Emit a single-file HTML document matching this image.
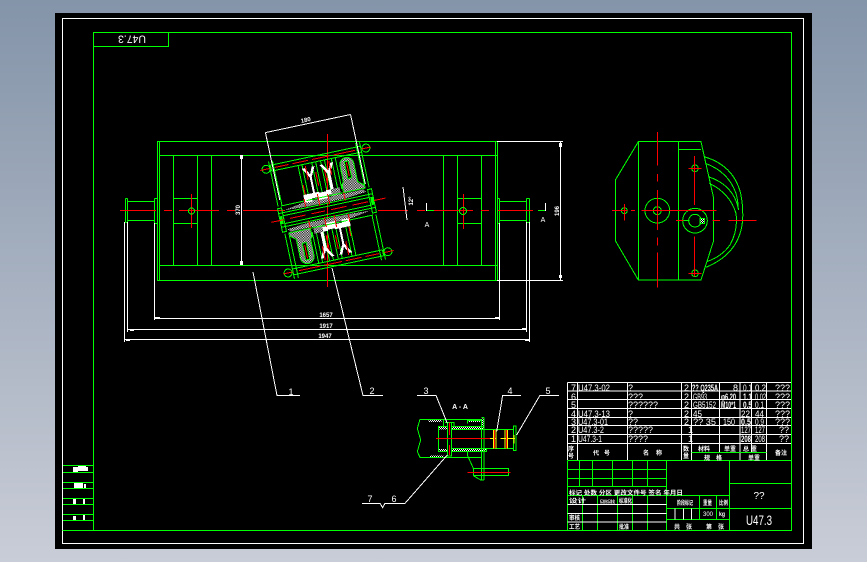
<!DOCTYPE html>
<html><head><meta charset="utf-8"><style>
html,body{margin:0;padding:0;width:867px;height:562px;overflow:hidden;background:#aab}
svg{display:block}
text{font-family:"Liberation Sans","Noto Sans CJK SC",sans-serif;fill:#fff;stroke:none}
.g{stroke:#0f0;fill:none}.r{stroke:#f00;fill:none}.w{stroke:#fff;fill:none}.y{stroke:#ff0;fill:none}
</style></head><body>
<svg width="867" height="562" viewBox="0 0 867 562" xmlns="http://www.w3.org/2000/svg" shape-rendering="crispEdges">
<defs>
<linearGradient id="bg" x1="0" y1="0" x2="0" y2="1"><stop offset="0" stop-color="#8494a9"/><stop offset="1" stop-color="#c9cdd7"/></linearGradient>
<pattern id="h" width="2" height="2" patternUnits="userSpaceOnUse"><rect width="2" height="2" fill="#000"/><rect width="1" height="1" fill="#fff"/><rect x="1" y="1" width="1" height="1" fill="#fff"/></pattern>
<pattern id="hz" width="6" height="6" patternUnits="userSpaceOnUse"><rect width="6" height="6" fill="#000"/><rect width="3" height="3" fill="#fff"/><rect x="3" y="3" width="3" height="3" fill="#fff"/></pattern>
<g id="half">
 <path class="g" d="M-46 -56H46M-46 -50H46M-46 -56V-50M46 -56V-50"/>
 <path class="r" d="M-42 -53H-28M-24 -53H-8M-4 -53H14M18 -53H40"/>
 <circle class="g" cx="51" cy="-53" r="4"/><circle class="g" cx="-51" cy="-53" r="4"/>
 <path class="r" d="M-57 -53H-46M46 -53H56"/>
 <path class="g" d="M-47 -60V-14M-43 -60V-14M46 -60V-14M42 -60V-14"/>
 <path class="g" d="M-19 -50V-18M-15 -50V-18M-5 -50V-18M-1 -50V-18M4 -50V-18M8 -50V-18M15 -50V-18M19 -50V-18"/>
 <path d="M-16 -46L-10 -36V-20H-15V-15H-4V-20H-8V-36L-3 -46H-6L-9 -39L-13 -46Z" fill="#fff"/>
 <path d="M2 -46L8 -36V-20H3V-15H16V-20H11V-36L16 -46H13L9.500 -39L5 -46Z" fill="#fff"/>
 <path d="M22 -41A7 7 0 0 1 36 -41V-22L42 -17V-14H20V-22L22 -25Z" fill="url(#h)" stroke="#0f0"/>
 <rect x="27" y="-44" width="4" height="17" fill="#000" stroke="#0f0"/>
 <path class="r" d="M29 -43V-29M-12 -48V-34M12 -48V-34M-3 -40V-26M6 -40V-24M-18 -30V-20"/>
 <path d="M-42 -9L-20 -13H40L42 -10L20 -8H-20Z" fill="url(#h)"/>
 <rect x="-20" y="-20" width="8" height="8" fill="#fff"/><rect x="-6" y="-19" width="10" height="7" fill="#fff"/><rect x="8" y="-20" width="9" height="7" fill="url(#h)"/>
 <path class="g" d="M-48 -7H48M-44 -4H44M-18 -14H42M-44 -14H-20"/>
 <path class="r" d="M-20 -16V-8M-6 -18V-6M4 -16V-6M20 -14V-6"/>
 <rect x="44" y="-12" width="4" height="24" stroke="#0f0" fill="none"/><rect x="45" y="-4" width="3" height="8" fill="#0f0"/>
</g>
</defs>
<rect width="867" height="562" fill="url(#bg)"/>
<rect x="55" y="13" width="757" height="536" fill="#000"/>
<rect class="w" x="62.500" y="18.500" width="741" height="525"/>
<path class="g" d="M93.500 530.500V32.500H791.500V530.500H62.500M93.500 46.500H168.500V32.500"/>
<text transform="translate(132,39.500) rotate(180)" text-anchor="middle" y="4" font-size="11" textLength="28" lengthAdjust="spacingAndGlyphs">U47.3</text>

<!-- left stamp box -->
<path class="g" d="M63 465.500H93M63 472.500H93M63 482.500H93M63 488.500H93M63 498.500H93M63 504.500H93M63 514.500H93M63 520.500H93"/>
<g fill="#fff"><rect x="73" y="467" width="5" height="5"/><rect x="78" y="466" width="8" height="5"/><rect x="86" y="467" width="2" height="4"/><rect x="74" y="483" width="9" height="5"/><rect x="84" y="484" width="2" height="4"/><rect x="73" y="499" width="3" height="5"/><rect x="83" y="499" width="2" height="5"/><rect x="73" y="516" width="3" height="4"/><rect x="83" y="515" width="2" height="5"/></g>

<!-- main view -->
<path class="g" d="M157.500 141.500H497.500V280.500H157.500ZM159.500 141.500V280.500M495.500 141.500V280.500M159.500 155.500H497M159.500 265.500H497M173.500 155.500V265.500M197.500 155.500V265.500M211.500 155.500V265.500M443.500 155.500V265.500M457.500 155.500V265.500M481.500 155.500V265.500M173.500 198.500H197.500M173.500 223.500H197.500M457.500 198.500H481.500M457.500 223.500H481.500"/>
<path class="g" d="M125.500 198.500V222.500M127.500 198.500V222.500M125.500 198.500H127.500M125.500 222.500H127.500M127.500 201.500H154.500M127.500 220.500H154.500M154.500 198.500V223.500M157 198.500H154.500M157 223.500H154.500"/>
<path class="g" d="M499.500 198.500V223.500M497 198.500H499.500M497 223.500H499.500M499.500 201.500H526.500M499.500 220.500H526.500M526.500 198.500V222.500M529.500 198.500V222.500M526.500 198.500H529.500M526.500 222.500H529.500"/>
<path class="r" d="M120 210.500H156M164 210.500H172M179 210.500H219M227 210.500H235M243 210.500H285M378 210.500H408M417 210.500H425M434 210.500H473M481 210.500H489M498 210.500H533M191.500 194V228M463.500 194V229M327.500 134V287"/>
<path class="g" d="M427 210.500H434M538 210.500H545"/>
<circle class="g" cx="191.500" cy="211" r="3"/><circle class="g" cx="463" cy="211" r="3.500"/>
<path class="w" d="M426.500 203V211M545.500 203V211M241.500 155V265M560.500 141V280M497 141.500H563M497 280.500H563"/>
<path class="w" d="M154.500 223V320M154 318.500H500M499.500 223V320M127.500 222V332M127 329.500H527M526.500 222V332M124.500 222V342M124 339.500H530M529.500 222V342"/>
<g fill="#fff"><rect x="240" y="155" width="3" height="4"/><rect x="240" y="261" width="3" height="4"/><rect x="559" y="143" width="3" height="4"/><rect x="559" y="275" width="3" height="3"/><rect x="155" y="317" width="5" height="1"/><rect x="495" y="317" width="4" height="1"/><rect x="130" y="330" width="4" height="1"/><rect x="522" y="328" width="4" height="2"/><rect x="126" y="340" width="4" height="1"/><rect x="525" y="340" width="4" height="1"/></g>
<text x="326" y="317" text-anchor="middle" font-size="6" font-weight="bold">1657</text>
<text x="326" y="328" text-anchor="middle" font-size="6" font-weight="bold">1917</text>
<text x="325" y="338" text-anchor="middle" font-size="6" font-weight="bold">1947</text>
<text transform="translate(238,210) rotate(-90)" text-anchor="middle" y="2" font-size="6" font-weight="bold">370</text>
<text transform="translate(557,211) rotate(-90)" text-anchor="middle" y="2" font-size="6" font-weight="bold">196</text>
<text x="427" y="227" text-anchor="middle" font-size="7">A</text>
<text x="543" y="222" text-anchor="middle" font-size="7">A</text>

<!-- rotated assembly -->
<g transform="translate(327,210.500) rotate(-12)">
 <use href="#half"/>
 <use href="#half" transform="rotate(180)"/>
 <path class="r" d="M-57 0H-44M-38 0H-22M-16 0H-2M4 0H20M26 0H42M48 0H60"/>
 <path class="w" d="M-44 -89H43M-44 -89V-20M43 -89V-18"/>
 <text x="-2" y="-91" font-size="6" font-weight="bold" text-anchor="middle">180</text>
</g>
<path class="w" d="M403 187L407 220"/>
<text transform="translate(411,201) rotate(-90)" text-anchor="middle" y="2" font-size="6" font-weight="bold">12°</text>

<!-- leaders -->
<path class="w" d="M253 272L277 395.500H300M332 268L363 395.500H383"/>
<text x="291" y="395" text-anchor="middle" font-size="9">1</text>
<text x="372" y="394" text-anchor="middle" font-size="9">2</text>

<!-- side view -->
<g transform="translate(600,130) scale(.3333)" stroke-width="3">
 <path class="g" d="M115 35L46 150V332L115 450H303L340 335V200L303 35ZM115 35V450M235 35V450M235 58H303" stroke-width="3"/>
 <path class="g" stroke-width="3" d="M312 80Q400 105 422 190Q430 230 428 270Q420 370 318 412M316 100Q385 125 408 190Q415 215 415 240M325 140Q400 165 415 235M328 160Q390 190 408 250Q415 300 390 345Q365 380 320 395"/>
 <circle class="g" stroke-width="3" cx="172" cy="242" r="37"/><circle class="g" stroke-width="3" cx="172" cy="242" r="12"/>
 <circle class="g" stroke-width="3" cx="285" cy="272" r="37"/><circle class="g" stroke-width="3" cx="285" cy="272" r="19"/>
 <circle class="g" stroke-width="3" cx="285" cy="115" r="10"/><circle class="g" stroke-width="3" cx="285" cy="430" r="10"/><circle class="g" stroke-width="3" cx="73" cy="242" r="9"/>
 <rect x="300" y="266" width="14" height="14" fill="url(#hz)" stroke="#0f0" stroke-width="3"/>
 <path class="g" stroke-width="3" d="M250 272H268"/>
 <path class="r" stroke-width="3" d="M172 6V107M172 132V155M172 180V300M172 322V347M172 368V473M36 242H82M93 242H105M125 242H350M283 78V225M283 320V440M228 272H250M338 272H360M385 272H470M265 115H305M265 430H305M73 222V272"/>
</g>

<!-- section A-A -->
<g transform="translate(360,380) scale(.3333)" stroke-width="3">
 <rect x="275" y="140" width="97" height="8" fill="url(#hz)"/><rect x="275" y="207" width="105" height="8" fill="url(#hz)"/>
 <rect x="235" y="140" width="27" height="8" fill="url(#hz)"/><rect x="235" y="207" width="27" height="8" fill="url(#hz)"/>
 <rect x="205" y="120" width="40" height="6" fill="url(#hz)"/><rect x="210" y="226" width="40" height="6" fill="url(#hz)"/>
 <rect x="325" y="120" width="40" height="6" fill="url(#hz)"/><rect x="365" y="115" width="7" height="25" fill="url(#hz)"/>
 <path class="g" stroke-width="3" d="M365 118H180L172 145L182 180L172 215L180 232H365M235 140H262V215H235ZM262 128V228H275V128ZM255 128H282V140M275 148H460M275 205H460M275 140H372M275 215H380V205M460 148V205M460 138H468V212H460ZM365 118V300M372 112V300M365 112H372M322 130V122H365M250 118V140M322 215V225L340 265H445V287H340V265M340 287L362 300H372"/>
 <path class="r" stroke-width="3" d="M228 175H392M323 277H452M268 128V165M268 195V225"/>
 <path class="y" stroke-width="3" d="M400 150V205M408 150V205M435 150V205M443 150V205M390 175H410M422 175H465M462 165V190"/>
 <path class="r" stroke-width="3" d="M404 150V205M439 150V205"/>
 <path class="w" stroke-width="3" d="M6 370H60L68 383L75 370H135L262 225M171 46H228L262 130M483 46H428L410 155M597 46H540L470 165"/>
</g>
<text x="426" y="394" text-anchor="middle" font-size="9">3</text>
<text x="510" y="394" text-anchor="middle" font-size="9">4</text>
<text x="548" y="394" text-anchor="middle" font-size="9">5</text>
<text x="370" y="502" text-anchor="middle" font-size="9">7</text>
<text x="394" y="502" text-anchor="middle" font-size="9">6</text>
<text x="460" y="409" text-anchor="middle" font-size="7" font-weight="bold">A - A</text>

<!-- title block -->
<g transform="translate(560,375) scale(.3333)">
 <path class="w" stroke-width="3" d="M22 22H693M22 48H693M22 74H693M22 100H693M22 127H693M22 152H693M22 178H693M22 205H693M22 22V255M52 22V255M202 22V255M365 22V255M395 22V255M478 22V232M540 22V255M575 22V232M620 22V255"/>
 <path class="g" stroke-width="3" d="M395 232H620M22 256H693M22 283H320M22 310H320M22 335H320M22 362H508M22 256V465M58 256V335M97 256V335M157 256V335M218 256V335M263 256V335M320 256V465M67 362V465M112 362V465M172 362V465M218 362V465M263 362V465M508 256V465M508 325H693M320 400H693M320 433H508M418 362V433M470 362V433"/>
 <path class="w" stroke-width="3" d="M22 415H320M22 441H320M22 388H320M345 400V433M370 400V433M395 400V433"/>
</g>
<g font-size="9">
<g transform="translate(0,383)">
<text x="571" y="8">7</text><text x="578" y="8" font-size="9" textLength="32" lengthAdjust="spacingAndGlyphs">U47.3-02</text><text x="628" y="8">?</text><text x="684" y="8">2</text><text x="692" y="8" textLength="26" lengthAdjust="spacingAndGlyphs" font-weight="bold">?? Q235A</text><text x="733" y="8">8</text><text x="743" y="8" textLength="9" lengthAdjust="spacingAndGlyphs">0.1</text><text x="755" y="8" textLength="11" lengthAdjust="spacingAndGlyphs">0.2</text><text x="775" y="8">???</text>
</g>
<g transform="translate(0,392)">
<text x="571" y="8">6</text><text x="628" y="8">???</text><text x="684" y="8">2</text><text x="693" y="8" textLength="14" lengthAdjust="spacingAndGlyphs">GB93</text><text x="721" y="8" textLength="15" lengthAdjust="spacingAndGlyphs" font-weight="bold">φ6.20</text><text x="743" y="8" textLength="9" lengthAdjust="spacingAndGlyphs" font-weight="bold">1.1</text><text x="755" y="8" textLength="11" lengthAdjust="spacingAndGlyphs">0.02</text><text x="775" y="8">???</text>
</g>
<g transform="translate(0,400)">
<text x="571" y="8">5</text><text x="628" y="8">??????</text><text x="684" y="8">2</text><text x="693" y="8" textLength="23" lengthAdjust="spacingAndGlyphs">GB5152</text><text x="721" y="8" textLength="15" lengthAdjust="spacingAndGlyphs" font-weight="bold">M10*1</text><text x="743" y="8" textLength="9" lengthAdjust="spacingAndGlyphs" font-weight="bold">0.5</text><text x="755" y="8" textLength="9" lengthAdjust="spacingAndGlyphs">0.1</text><text x="775" y="8">???</text>
</g>
<g transform="translate(0,409)">
<text x="571" y="8">4</text><text x="578" y="8" textLength="32" lengthAdjust="spacingAndGlyphs">U47.3-13</text><text x="628" y="8">?</text><text x="684" y="8">2</text><text x="693" y="8" textLength="9" lengthAdjust="spacingAndGlyphs">45</text><text x="741" y="8" textLength="9" lengthAdjust="spacingAndGlyphs">22</text><text x="755" y="8" textLength="9" lengthAdjust="spacingAndGlyphs">44</text><text x="775" y="8">???</text>
</g>
<g transform="translate(0,417)">
<text x="571" y="8">3</text><text x="578" y="8" textLength="30" lengthAdjust="spacingAndGlyphs">U47.3-01</text><text x="628" y="8">??</text><text x="684" y="8">2</text><text x="693" y="8" textLength="23" lengthAdjust="spacingAndGlyphs">?? 35</text><text x="723" y="8" textLength="12" lengthAdjust="spacingAndGlyphs">150</text><text x="741" y="8" textLength="10" lengthAdjust="spacingAndGlyphs" font-weight="bold">0.5</text><text x="755" y="8" textLength="9" lengthAdjust="spacingAndGlyphs">0.9</text><text x="775" y="8">???</text>
</g>
<g transform="translate(0,425)">
<text x="571" y="8">2</text><text x="578" y="8" textLength="26" lengthAdjust="spacingAndGlyphs">U47.3-2</text><text x="628" y="8">?????</text><text x="688" y="8">1</text><text x="741" y="8" textLength="10" lengthAdjust="spacingAndGlyphs">127</text><text x="755" y="8" textLength="10" lengthAdjust="spacingAndGlyphs">127</text><text x="779" y="8">??</text>
</g>
<g transform="translate(0,434)">
<text x="571" y="8">1</text><text x="578" y="8" textLength="24" lengthAdjust="spacingAndGlyphs">U47.3-1</text><text x="628" y="8">????</text><text x="688" y="8">1</text><text x="741" y="8" textLength="10" lengthAdjust="spacingAndGlyphs" font-weight="bold">208</text><text x="755" y="8" textLength="10" lengthAdjust="spacingAndGlyphs">208</text><text x="779" y="8">??</text>
</g>
</g>
<g font-size="6" font-weight="bold">
<text x="571" y="451" text-anchor="middle">序</text><text x="571" y="458" text-anchor="middle">号</text>
<text x="593" y="455">代</text><text x="604" y="455">号</text>
<text x="643" y="455">名</text><text x="656" y="455">称</text>
<text x="686" y="451" text-anchor="middle">数</text><text x="686" y="458" text-anchor="middle">量</text>
<text x="698" y="451">材</text><text x="704" y="451">料</text><text x="704" y="460">规</text><text x="716" y="460">格</text>
<text x="724" y="451">单</text><text x="730" y="451">重</text><text x="743" y="451">总</text><text x="751" y="451">重</text><text x="748" y="460" font-size="6">单重</text>
<text x="775" y="455">备</text><text x="781" y="455">注</text>
<text x="569" y="495" textLength="114" lengthAdjust="spacingAndGlyphs">标记 处数 分区 更改文件号 签名 年月日</text>
<text x="569" y="503" textLength="17" lengthAdjust="spacingAndGlyphs">设计</text>
<text x="600" y="503" font-size="4" textLength="15" lengthAdjust="spacingAndGlyphs">标准化标准化</text>
<text x="619" y="503" textLength="13" lengthAdjust="spacingAndGlyphs">标准化</text>
<text x="677" y="505" textLength="16" lengthAdjust="spacingAndGlyphs">阶段标记</text>
<text x="703" y="505" textLength="9" lengthAdjust="spacingAndGlyphs">重量</text>
<text x="719" y="505" textLength="9" lengthAdjust="spacingAndGlyphs">比例</text>
<text x="569" y="520" textLength="11" lengthAdjust="spacingAndGlyphs">审核</text>
<text x="569" y="529" textLength="11" lengthAdjust="spacingAndGlyphs">工艺</text>
<text x="619" y="529" textLength="10" lengthAdjust="spacingAndGlyphs">批准</text>
<text x="674" y="529">共</text><text x="686" y="529">张</text><text x="706" y="529">第</text><text x="718" y="529">张</text>
<text x="703" y="516" font-weight="normal" textLength="10" lengthAdjust="spacingAndGlyphs">300</text>
<text x="719" y="516" textLength="6" lengthAdjust="spacingAndGlyphs">kg</text>
</g>
<text x="759" y="499" text-anchor="middle" font-size="10">??</text>
<text x="759" y="525" text-anchor="middle" font-size="14" textLength="26" lengthAdjust="spacingAndGlyphs">U47.3</text>
</svg>
</body></html>
